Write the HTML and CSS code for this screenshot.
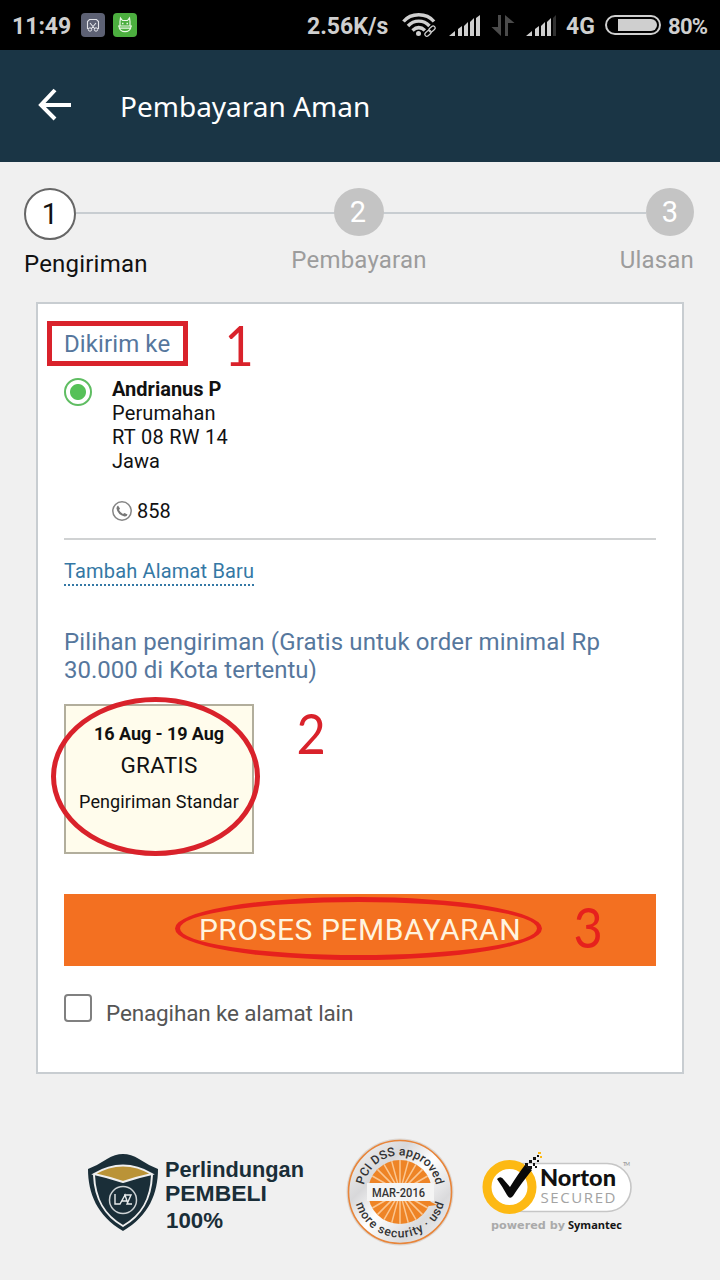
FILE: index.html
```html
<!DOCTYPE html>
<html lang="id">
<head>
<meta charset="utf-8">
<title>Pembayaran Aman</title>
<link rel="stylesheet" href="styles.css">
</head>
<body>
<header class="status">
  <span class="status-time">11:49</span>
  <svg class="app-icon" width="24" height="24" viewBox="0 0 24 24"><rect width="24" height="24" rx="4" fill="#5d6174"/><path d="M7.500 15.500H6.500V8.500L8.500 6.500H15.500L17.500 8.500V15.500H16.500M9 10L14 16M15 10L10 16" fill="none" stroke="#e4e5ea" stroke-width="1.100"/><circle cx="9" cy="16.500" r="1.700" fill="none" stroke="#e4e5ea"/><circle cx="15" cy="16.500" r="1.700" fill="none" stroke="#e4e5ea"/></svg>
  <svg class="app-icon" width="24" height="24" viewBox="0 0 24 24"><rect width="24" height="24" rx="4" fill="#4cae3f"/><path d="M7 13V8.500L7.500 5L9.500 7.500H14.500L16.500 5L17 8.500V13M5 13H19M6 15.200H18M6 13C6 20.500 18 20.500 18 13" fill="none" stroke="#eaf7e6" stroke-width="1.200"/><path d="M9 9.800h1.500v1.500H9zM13.500 9.800H15v1.500h-1.500z" fill="#eaf7e6"/></svg>
  <span class="status-speed">2.56K/s</span>
  <svg class="status-icons" width="156" height="30" viewBox="400 10 156 30">
    <g fill="none" stroke="#cfcfcf" stroke-width="3.400"><path d="M403.500 21.500C411 12.500 426.500 12.500 434 21.500"/><path d="M408 26C414 19.500 423.500 19.500 429.500 26"/><path d="M412.500 30.500C416.500 26.800 421 26.800 425 30.500"/></g>
    <circle cx="418.500" cy="33.500" r="2.500" fill="#cfcfcf"/>
    <g fill="none" stroke="#000" stroke-width="3"><rect x="423.500" y="31" width="8" height="4.500" rx="2" transform="rotate(-42 427.500 33)"/><rect x="428" y="27" width="8" height="4.500" rx="2" transform="rotate(-42 432 29)"/></g>
    <g fill="none" stroke="#cfcfcf" stroke-width="1.200"><rect x="424.500" y="31.200" width="7" height="4" rx="2" transform="rotate(-42 428 33.200)"/><rect x="428.500" y="27" width="7" height="4" rx="2" transform="rotate(-42 432 29)"/></g>
    <path d="M449 36L455 31V36ZM458 29L462 26V36H458ZM464 26L468 22V36H464ZM470 22L474 18V36H470ZM476 18L480 15V36H476ZM526 36L532 31V36ZM535 29L539 26V36H535ZM541 26L545 22V36H541ZM547 22L551 18V36H547Z" fill="#cfcfcf"/>
    <path d="M498 15H501V36L491.500 27H498ZM505 36H508V23H514.500L505 15Z" fill="#4b4b4b"/>
    <path d="M553 18L556 15V36H553Z" fill="#303030"/>
  </svg>
  <span class="status-net">4G</span>
  <svg class="battery" width="56" height="20" viewBox="0 0 56 20"><rect x="1" y="1" width="54" height="18" rx="9" fill="none" stroke="#cfcfcf" stroke-width="2"/><path d="M13 4H46A6 6 0 0 1 46 16H13Z" fill="#cfcfcf"/></svg>
  <span class="status-pct">80%</span>
</header>
<nav class="appbar">
  <svg class="back" width="34" height="34" viewBox="0 0 34 34"><path d="M17 2L3 17L17 31M3 17H33" fill="none" stroke="#fff" stroke-width="4"/></svg>
  <h1 class="title">Pembayaran Aman</h1>
</nav>
<main>
  <ol class="steps">
    <li class="step step-active"><span class="dot">1</span><span class="label">Pengiriman</span></li>
    <li class="step step-mid"><span class="dot">2</span><span class="label">Pembayaran</span></li>
    <li class="step step-last"><span class="dot">3</span><span class="label">Ulasan</span></li>
  </ol>
  <section class="card">
    <h2 class="heading"><span class="ship-to">Dikirim ke</span></h2>
    <div class="address">
      <span class="radio"></span>
      <div class="lines">
        <strong class="name">Andrianus P</strong>
        <span class="street">Perumahan</span>
        <span class="block">RT 08 RW 14</span>
        <span>Jawa</span>
        <span class="phone"><svg width="20" height="20" viewBox="0 0 20 20"><circle cx="10" cy="10" r="9.200" fill="none" stroke="#858585" stroke-width="1.500"/><path d="M6 4.500L8 7.500L7 9Q8.500 11.800 11 13L12.500 12L15.500 13.500Q15 15.800 12.500 15.500Q5.500 13.500 4.500 7.500Q4.500 5.500 6 4.500Z" fill="#777"/></svg><span>858</span></span>
      </div>
    </div>
    <a class="add">Tambah Alamat Baru</a>
    <h2 class="heading delivery"><span class="delivery-terms">Pilihan pengiriman (Gratis untuk order minimal Rp</span><br><span>30.000 di Kota tertentu)</span></h2>
    <div class="option">
      <strong class="date">16 Aug - 19 Aug</strong>
      <span class="price">GRATIS</span>
      <span class="kind">Pengiriman Standar</span>
    </div>
    <button class="pay"><span>PROSES PEMBAYARAN</span></button>
    <label class="billing"><span class="check"></span><span class="billing-text">Penagihan ke alamat lain</span></label>
    <span class="mark-box"></span>
    <span class="mark-num n1">1</span>
    <span class="mark-oval o2"></span>
    <span class="mark-num n2">2</span>
    <span class="mark-oval o3"></span>
    <span class="mark-num n3">3</span>
  </section>
</main>
<footer class="badges">
  <svg width="218" height="110" viewBox="88 1138 218 110">
    <path d="M123 1154Q131 1154 139 1159Q148 1165 158 1169C158 1193 149 1216 123 1231C97 1216 88 1193 88 1169Q98 1165 107 1159Q115 1154 123 1154Z" fill="#1a2e38"/>
    <path d="M94 1175C95 1199 104 1215 123 1226C142 1215 151 1199 152 1175" fill="none" stroke="#efefef" stroke-width="2"/>
    <path d="M94 1174Q123 1157 152 1174Q138 1177 123 1182Q108 1177 94 1174Z" fill="#ba9337" stroke="#efefef" stroke-width="2"/>
    <circle cx="123" cy="1200" r="13.500" fill="none" stroke="#cdd2d4" stroke-width="1.500"/>
    <path d="M115 1194V1204H120L125 1195L128 1204M121.500 1201H127M124 1195H131L127 1204H132" fill="none" stroke="#e8ebec" stroke-width="1.400"/>
    <g class="protect" fill="#1a2e38"><text x="165" y="1177" font-size="22" textLength="139" lengthAdjust="spacingAndGlyphs">Perlindungan</text><text x="165" y="1201" font-size="22" textLength="102" lengthAdjust="spacingAndGlyphs">PEMBELI</text><text x="166" y="1228" font-size="22" textLength="57" lengthAdjust="spacingAndGlyphs">100%</text></g>
  </svg>
  <svg width="110" height="110" viewBox="0 0 110 110">
    <defs>
      <linearGradient id="silver" x1="0" y1="0" x2="1" y2="1"><stop offset="0" stop-color="#f8f8f8"/><stop offset=".3" stop-color="#d8d8da"/><stop offset=".5" stop-color="#fff"/><stop offset=".75" stop-color="#dadadc"/><stop offset="1" stop-color="#f6f6f6"/></linearGradient>
      <path id="arcTop" d="M18.400 54A36.600 36.600 0 0 1 91.600 54"/>
      <path id="arcBottom" d="M9.500 54A45.500 45.500 0 0 0 100.500 54"/>
    </defs>
    <circle cx="55" cy="54" r="53.500" fill="#ddd6d0"/>
    <circle cx="55" cy="54" r="51.500" fill="url(#silver)" stroke="#e8853a" stroke-width="1.600"/>
    <circle cx="55" cy="54" r="32" fill="#ee8426"/>
    <path d="M55 22V86M46.700 23.100L63.300 84.900M39 26.300L71 81.700M32.400 31.400L77.600 76.600M27.300 38L82.700 70M63.300 23.100L46.700 84.900M71 26.300L39 81.700M77.600 31.400L32.400 76.600M82.700 38L27.300 70" stroke="#fbc690" stroke-width="1.500"/>
    <path d="M22 45H89V63H22Z" fill="#f4f4f4"/>
    <path d="M84 63L92 67L84 68Z" fill="#ee8426"/>
    <g class="seal"><text x="27" y="58.500" font-size="12.500" textLength="53" lengthAdjust="spacingAndGlyphs">MAR-2016</text>
    <text font-size="12.200"><textPath href="#arcTop" startOffset="7" textLength="101">PCI DSS approved</textPath></text>
    <text font-size="12.200"><textPath href="#arcBottom" startOffset="12" textLength="119">more security · usd</textPath></text></g>
  </svg>
  <svg width="152" height="110" viewBox="482 1138 152 110">
    <rect x="500" y="1163.500" width="131" height="48" rx="24" fill="#fff" stroke="#c6c6c6" stroke-width="1.600"/>
    <circle cx="509.500" cy="1187" r="22.500" fill="#fff" stroke="#fdb913" stroke-width="9"/>
    <path d="M497 1179Q501 1175 504 1180L510 1187Q518 1174 525 1165L532 1170Q520 1185 513 1196Q510 1200 507 1195Q502 1186 497 1179Z" fill="#090909"/>
    <path d="M525 1163h3v3h-3zM529 1166h3v3h-3zM529 1160h3v3h-3zM533 1163h2v3h-2zM533 1157h3v3h-3zM537 1160h2v2h-2zM537 1155h2v2h-2zM527 1166h4v3h-4zM535 1166h2v2h-2z" fill="#111"/><path d="M538 1152h3v2h-3zM540 1156h2v2h-2z" fill="#fdb913"/>
    <g class="norton"><text x="540" y="1186" font-size="23.500" fill="#111" font-weight="900" textLength="76" lengthAdjust="spacingAndGlyphs">Norton</text><text class="secured" x="540.500" y="1203" font-size="15" fill="#a3a3a3" textLength="75" lengthAdjust="spacing">SECURED</text><text x="623" y="1166" font-size="5" fill="#888" textLength="7">TM</text></g>
    <text class="powered" x="491" y="1229" font-size="11" fill="#aaa" font-weight="700" textLength="74" lengthAdjust="spacingAndGlyphs">powered by</text><text class="symantec" x="568" y="1229" font-size="11" fill="#151515" font-weight="700" textLength="54" lengthAdjust="spacingAndGlyphs">Symantec</text>
  </svg>
</footer>
</body>
</html>
```
FILE: styles.css
```css
* { box-sizing: border-box; }
body { margin: 0; width: 720px; height: 1280px; overflow: hidden; background: #f0f0f0; font-family: Roboto, sans-serif; color: #111; white-space: nowrap; }
svg { display: block; flex: none; }
h1, h2, ol { margin: 0; padding: 0; font-weight: 400; }
.status { display: flex; align-items: center; height: 50px; padding-left: 12px; background: #000; color: #cfcfcf; font-size: 23px; font-weight: 700; }
.status > span { flex: none; height: 27px; line-height: 29px; }
.status-time { width: 69px; }
.app-icon + .app-icon { margin-left: 8px; }
.status-speed { width: 82px; margin-left: 170px; }
.status-icons { margin-left: 11px; }
.status-net { width: 28px; margin-left: 10px; }
.battery { margin-left: 11px; }
.status-pct { margin-left: 7px; font-size: 22px; letter-spacing: -0.7px; }
.appbar { display: flex; align-items: center; height: 112px; padding: 0 0 2px 38px; background: #1a3545; }
.title { margin: 2px 0 0 48px; color: #fff; font: 28px "Noto Sans", sans-serif; }
.steps { position: relative; display: grid; grid-template-columns: 1fr auto 1fr; height: 140px; padding: 26px 26px 0 24px; list-style: none; }
.steps::before { content: ""; position: absolute; left: 76px; right: 74px; top: 50px; height: 2px; background: #c8cdd1; }
.step { position: relative; display: flex; flex-direction: column; align-items: center; color: #9c9c9c; font-size: 24px; line-height: 28px; }
.label { letter-spacing: 0.2px; }
.step-active { align-items: flex-start; color: #111; }
.step-last { align-items: flex-end; }
.dot { display: flex; align-items: center; justify-content: center; width: 48px; height: 48px; margin-bottom: 10px; border-radius: 50%; background: #c4c4c4; color: #fff; font-size: 29px; }
.step-active .dot { width: 52px; height: 52px; border: 2px solid #666; background: #fff; color: #111; }
.step-mid .dot { width: 50px; padding-right: 2px; }
.card { position: relative; width: 648px; height: 772px; margin: 0 36px; padding: 26px; border: 2px solid #c8cdd1; background: #fff; }
.heading { color: #56779d; font-size: 24px; line-height: 28px; }
.ship-to { letter-spacing: 0.1px; }
.address { display: flex; gap: 20px; height: 164px; margin-top: 18px; border-bottom: 2px solid #d0d2d3; }
.radio { width: 28px; height: 28px; margin-top: 2px; border: 2px solid #5fbd62; border-radius: 50%; background: radial-gradient(circle, #56c158 0 7.500px, #fff 8.500px); }
.lines { display: flex; flex-direction: column; padding-top: 1px; font-size: 20px; line-height: 24px; }
.street { letter-spacing: 0.15px; }
.block { letter-spacing: 0.28px; }
.phone { display: flex; align-items: center; gap: 5px; margin-top: 26px; }
.add { display: block; width: 190px; height: 27px; margin-top: 19px; border-bottom: 2px dotted #3478a5; color: #3478a5; font-size: 20px; line-height: 24px; letter-spacing: 0.17px; }
.delivery { margin-top: 42px; }
.delivery-terms { letter-spacing: 0.14px; }
.option { display: flex; flex-direction: column; align-items: center; width: 190px; height: 150px; margin-top: 20px; padding-top: 16px; border: 2px solid #b2ae9c; background: #fffcec; font-size: 18px; line-height: 24px; }
.date { letter-spacing: -0.08px; }
.price { margin-top: 7px; font-size: 22.500px; letter-spacing: 0.3px; }
.kind { margin-top: 13px; letter-spacing: 0.1px; }
.pay { display: block; width: 592px; height: 72px; margin-top: 40px; padding: 0; border: 0; background: #f37021; color: #fff4df; font: 30px/34px Roboto, sans-serif; letter-spacing: 0.55px; }
.billing { display: flex; margin-top: 28px; gap: 14px; color: #555; font-size: 22.500px; line-height: 28px; letter-spacing: -0.14px; }
.check { width: 28px; height: 28px; border: 2px solid #808080; border-radius: 4px; }
.billing-text { padding-top: 5px; }
.mark-box { position: absolute; left: 9px; top: 17px; width: 141px; height: 45px; border: 5px solid #d9222b; }
.mark-oval { position: absolute; border: 5px solid #d9222b; border-radius: 50%; }
.o2 { left: 13px; top: 393px; width: 209px; height: 159px; }
.o3 { left: 137px; top: 593px; width: 367px; height: 63px; border-color: #e6211d; }
.mark-num { position: absolute; color: #d9222b; font: 56px/60px Lato, sans-serif; transform: scaleX(0.9); }
.n1 { left: 185px; top: 11px; }
.n2 { left: 257px; top: 399px; }
.n3 { left: 534px; top: 593px; color: #e6211d; }
.badges { display: flex; margin-top: 64px; padding-left: 88px; }
.badges svg:nth-child(2) { margin-left: 39px; }
.badges svg:nth-child(3) { margin-left: 27px; }
.protect { font-family: "Liberation Sans", sans-serif; font-weight: 700; }
.seal { font-family: Roboto, sans-serif; font-weight: 500; fill: #333; }
.norton { font-family: Lato, sans-serif; }
.secured, .symantec { font-family: "Open Sans", sans-serif; }
.powered { font-family: "DejaVu Sans", sans-serif; }
```
